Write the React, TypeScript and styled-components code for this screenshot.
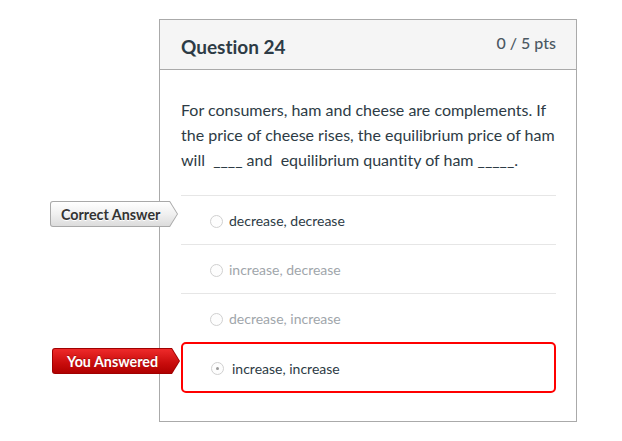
import React from "react";
import styled, { createGlobalStyle } from "styled-components";

const GlobalStyle = createGlobalStyle`
  html, body {
    margin: 0;
    padding: 0;
    background: #ffffff;
  }
  body {
    font-family: Lato, "Open Sans", "Liberation Sans", sans-serif;
    font-variant-ligatures: no-common-ligatures;
    color: #2d3b45;
  }
`;

const Page = styled.div`
  padding: 19px 0 0 159px;
  width: 622px;
  height: 441px;
  box-sizing: border-box;
`;

const Card = styled.div`
  width: 418px;
  box-sizing: border-box;
  border: 1px solid #aaaaaa;
  background: #ffffff;
`;

const Header = styled.div`
  height: 50px;
  box-sizing: border-box;
  background: #f5f5f5;
  border-bottom: 1px solid #aaaaaa;
  display: flex;
  justify-content: space-between;
  align-items: flex-start;
  padding: 0 20px 0 21px;
`;

const Title = styled.h2`
  margin: 0;
  padding-top: 14px;
  font-size: 19px;
  line-height: 26px;
  font-weight: 700;
  color: #2d3b45;
`;

const Points = styled.div`
  padding-top: 12px;
  font-size: 16px;
  line-height: 22px;
  font-weight: 500;
  color: #4b5862;
`;

const Body = styled.div`
  padding: 27px 20px 28px 21px;
`;

const QuestionText = styled.p`
  margin: 0 0 23px;
  font-size: 16px;
  line-height: 25px;
  color: #2d3b45;
`;

const Answers = styled.div`
  display: flex;
  flex-direction: column;
`;

const AnswerRow = styled.div<{ $selected?: boolean }>`
  position: relative;
  height: ${(p) => (p.$selected ? "51px" : "49px")};
  box-sizing: border-box;
  display: flex;
  align-items: center;
  gap: ${(p) => (p.$selected ? "8px" : "6px")};
  padding-top: 2px;
  padding-left: ${(p) => (p.$selected ? "28px" : "29px")};
  border-top: 1px solid #e6e6e6;
  ${(p) =>
    p.$selected &&
    `
    border: 2px solid #ff0000;
    border-radius: 5px;
  `}
  font-size: 14px;
`;

const Radio = styled.span<{ $dot?: boolean }>`
  width: 13px;
  height: 13px;
  box-sizing: border-box;
  border-radius: 50%;
  border: 1px solid #d0d0d0;
  background: #fdfdfd;
  display: flex;
  align-items: center;
  justify-content: center;
  &::after {
    content: "";
    display: ${(p) => (p.$dot ? "block" : "none")};
    width: 3px;
    height: 3px;
    border-radius: 50%;
    background: #9a9a9a;
  }
`;

const AnswerLabel = styled.span<{ $muted?: boolean }>`
  color: ${(p) => (p.$muted ? "#9fa6ab" : "#2d3b45")};
  line-height: 18px;
`;

const Tag = styled.div<{ $red?: boolean; $top: number; $h: number }>`
  position: absolute;
  left: -131px;
  top: ${(p) => p.$top}px;
  width: 128px;
  height: ${(p) => p.$h}px;
  border-radius: 3px 0 0 3px;
  background: ${(p) => (p.$red ? "#a00000" : "#a9a9a9")};
  clip-path: polygon(0 0, 120px 0, 128px 50%, 120px 100%, 0 100%);
`;

const TagFace = styled.div<{ $red?: boolean }>`
  position: absolute;
  inset: 1px;
  border-radius: 2px 0 0 2px;
  background: ${(p) =>
    p.$red
      ? "linear-gradient(#ee2a2a, #c80c0c 60%, #b00000)"
      : "linear-gradient(#ffffff, #f0f0f0 50%, #dcdcdc)"};
  clip-path: polygon(0 0, 118.5px 0, 126px 50%, 118.5px 100%, 0 100%);
  display: flex;
  align-items: center;
  padding-left: ${(p) => (p.$red ? "14px" : "10px")};
  font-size: 14.3px;
  font-weight: 700;
  color: ${(p) => (p.$red ? "#ffffff" : "#333333")};
  text-shadow: ${(p) =>
    p.$red ? "0 -1px 0 rgba(0,0,0,0.25)" : "0 1px 0 #ffffff"};
  white-space: nowrap;
`;

const answers = [
  { text: "decrease, decrease", muted: false, tag: "correct" },
  { text: "increase, decrease", muted: true },
  { text: "decrease, increase", muted: true },
  { text: "increase, increase", muted: false, selected: true, tag: "answered" },
];

export default function App() {
  return (
    <>
      <GlobalStyle />
      <Page>
        <Card>
          <Header>
            <Title>Question 24</Title>
            <Points>0 / 5 pts</Points>
          </Header>
          <Body>
            <QuestionText>
              For consumers, ham and cheese are complements. If the price of
              cheese rises, the equilibrium price of ham will&nbsp;&nbsp;____ and&nbsp;&nbsp;equilibrium
              quantity of ham _____.
            </QuestionText>
            <Answers>
              {answers.map((a) => (
                <AnswerRow key={a.text} $selected={a.selected}>
                  {a.tag === "correct" && (
                    <Tag $top={5} $h={26}>
                      <TagFace>Correct Answer</TagFace>
                    </Tag>
                  )}
                  {a.tag === "answered" && (
                    <Tag $red $top={4} $h={26}>
                      <TagFace $red>You Answered</TagFace>
                    </Tag>
                  )}
                  <Radio $dot={a.selected} />
                  <AnswerLabel $muted={a.muted}>{a.text}</AnswerLabel>
                </AnswerRow>
              ))}
            </Answers>
          </Body>
        </Card>
      </Page>
    </>
  );
}
